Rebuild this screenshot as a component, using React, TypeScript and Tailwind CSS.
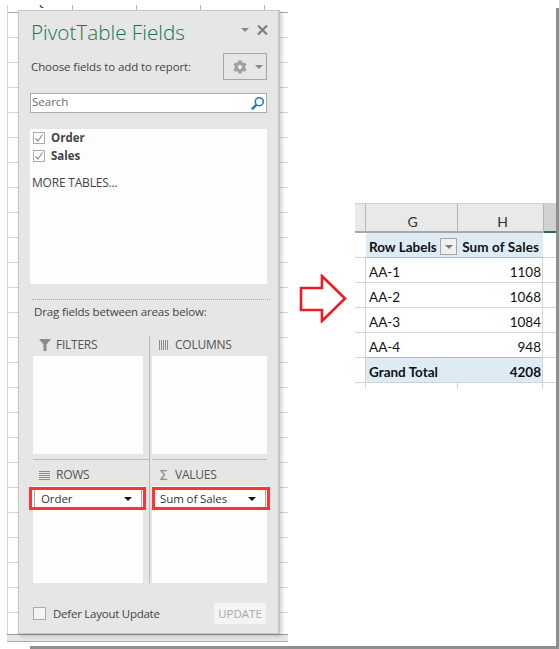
import React from "react";
import { FaCog } from "react-icons/fa";

const ui = "font-['Open_Sans',sans-serif]";

function Tri({ className, color = "#8a8a8a" }: { className?: string; color?: string }) {
  return (
    <svg width="8" height="4" viewBox="0 0 8 4" className={className}>
      <polygon points="0,0 8,0 4,4" fill={color} />
    </svg>
  );
}

function Check({ label, h }: { label: string; h: string }) {
  return (
    <div className={`flex items-center ${h} pl-[3px]`}>
      <div className="w-[12px] h-[12px] border border-[#ababab] bg-white flex items-center justify-center">
        <svg width="10" height="10" viewBox="0 0 10 10">
          <path d="M1.5 5.5 L4 8 L8.5 1.5" fill="none" stroke="#8e8e8e" strokeWidth="1.2" />
        </svg>
      </div>
      <span className="ml-[6px] text-[11.5px] font-bold text-[#444444]">{label}</span>
    </div>
  );
}

function ZoneHead({ icon, label, h }: { icon: React.ReactNode; label: string; h: string }) {
  return (
    <div className={`flex items-center ${h}`}>
      <div className="w-[23px] flex justify-center">{icon}</div>
      <span className="text-[12px] text-[#555555] tracking-[-0.25px]">{label}</span>
    </div>
  );
}

function Field({ label, left }: { label: string; left: boolean }) {
  return (
    <div className="h-[23px] border-[3px] border-[#ff3333] bg-white">
      <div className={`h-full flex items-center justify-between border-r border-[#aaaaaa] ${left ? "border-l ml-[2px] mr-[1px] pl-[6px] pr-[9px]" : "ml-0 mr-[1px] pl-[5px] pr-[9px]"}`}>
        <span className="text-[11.5px] text-[#333333] leading-none tracking-[-0.1px]">{label}</span>
        <Tri color="#111111" />
      </div>
    </div>
  );
}

function Row({ a, b, bold, blue }: { a: React.ReactNode; b: string; bold?: boolean; blue?: boolean }) {
  return (
    <div className="flex h-[25px] border-b border-[#d4d4d4]">
      <div className="w-[11px] border-r border-[#d4d4d4]" />
      <div className={`w-[92px] pl-[2px] pt-[5px] flex items-center ${bold ? "font-bold" : ""} ${blue ? "bg-[#ddebf7]" : ""}`}>{a}</div>
      <div className={`w-[85px] pr-[1px] pt-[5px] flex items-center justify-end border-r border-[#d4d4d4] ${bold ? "font-bold" : ""} ${blue ? "bg-[#ddebf7]" : ""}`}>{b}</div>
    </div>
  );
}

export default function App() {
  return (
    <div className={`relative w-[559px] h-[649px] bg-white overflow-hidden flex items-start ${ui}`}>
      {/* left sheet */}
      <div className="relative ml-[7px] mt-[5px] w-[281px] h-[637px] border-l border-[#d4d4d4] bg-[repeating-linear-gradient(to_bottom,transparent_0,transparent_7px,#d4d4d4_7px,#d4d4d4_8px,transparent_8px,transparent_25px)] shrink-0">
        <div className="absolute left-0 right-0 top-0 h-[8px] bg-white border-b border-[#a9a9a9] flex overflow-hidden text-[13px] text-[#333333] font-['Liberation_Sans',sans-serif]">
          {["Q", "R", "S", "T"].map((l, i) => (
            <div key={l} className={`h-full border-r border-[#b5b5b5] flex justify-center ${i === 0 ? "w-[65px]" : "w-[64px]"}`}>
              <span className="-mt-[11px] leading-[14px]">{l}</span>
            </div>
          ))}
        </div>

        {/* panel */}
        <div className="relative mt-[5px] ml-[10px] w-[262px] h-[624px] bg-[#e6e6e6] border border-[#c6c6c6] border-r-2 shadow-[2px_2px_4px_rgba(0,0,0,0.18)] pl-[11px]">
          <div className="flex items-center justify-between h-[42px] pr-[10px]">
            <span className="text-[20.7px] font-light text-[#217346] leading-none pl-[1px]">PivotTable Fields</span>
            <div className="flex items-center gap-[8px] -mt-[4px]">
              <Tri />
              <svg width="11" height="10" viewBox="0 0 11 10">
                <path d="M1 0.5 L10 9.5 M10 0.5 L1 9.5" stroke="#7f7f7f" strokeWidth="2.2" />
              </svg>
            </div>
          </div>

          <div className="flex items-center justify-between h-[27px] w-[237px]">
            <span className="text-[11.5px] text-[#444444] pl-[1px] tracking-[-0.1px]">Choose fields to add to report:</span>
            <div className="w-[44px] h-[27px] border border-[#a6a6a6] flex items-center pl-[9px] gap-[8px]">
              <FaCog size={14} color="#a0a0a0" />
              <Tri />
            </div>
          </div>

          <div className="mt-[13px] w-[237px] h-[20px] border border-[#ababab] bg-white flex items-center justify-between pl-[1px] pr-[1px]">
            <span className="text-[11.5px] text-[#6d6d6d] leading-none pb-[2px]">Search</span>
            <svg width="15" height="15" viewBox="0 0 15 15">
              <circle cx="9.3" cy="5.7" r="4" fill="none" stroke="#2f75b5" strokeWidth="1.6" />
              <path d="M6.5 8.7 L1.8 13.4" stroke="#2f75b5" strokeWidth="2.4" />
            </svg>
          </div>

          <div className="mt-[16px] w-[237px] h-[155px] bg-[#fdfdfd]">
            <Check label="Order" h="h-[17px]" />
            <Check label="Sales" h="h-[19px]" />
            <div className="mt-[8px] pl-[2px] h-[19px] flex items-center text-[12px] text-[#444444] tracking-[-0.2px]">MORE TABLES...</div>
          </div>

          <div className="mt-[15px] ml-[2px] w-[238px] border-t border-dotted border-[#a8a8a8]" />
          <div className="h-[24px] pl-[4px] flex items-center text-[11.5px] text-[#444444] tracking-[-0.15px]">Drag fields between areas below:</div>

          <div className="mt-[12px] ml-[3px] flex h-[247px]">
            <div className="w-[117px] border-r border-[#bbbbbb]">
              <div className="h-[124px] border-b border-[#bbbbbb]">
                <ZoneHead
                  h="h-[20px] pb-[2px]"
                  label="FILTERS"
                  icon={
                    <svg width="12" height="12" viewBox="0 0 12 12">
                      <path d="M0 0 H12 L7.5 5.5 V12 H4.5 V5.5 Z" fill="#8c8c8c" />
                    </svg>
                  }
                />
                <div className="w-[110px] h-[98px] bg-[#fdfdfd]" />
              </div>
              <ZoneHead
                h="h-[26px] pt-[4px]"
                label="ROWS"
                icon={
                  <svg width="11" height="9" viewBox="0 0 11 9">
                    <path d="M0 .5 H11 M0 2.5 H11 M0 4.5 H11 M0 6.5 H11 M0 8.5 H11" stroke="#8c8c8c" strokeWidth="1" />
                  </svg>
                }
              />
              <div className="w-[110px] h-[97px] bg-[#fdfdfd] pt-[1px]">
                <div className="-ml-[4px] -mr-[3px]">
                  <Field label="Order" left />
                </div>
              </div>
            </div>
            <div className="ml-[2px] w-[115px]">
              <div className="h-[124px] border-b border-[#bbbbbb]">
                <ZoneHead
                  h="h-[20px] pb-[2px]"
                  label="COLUMNS"
                  icon={
                    <svg width="10" height="10" viewBox="0 0 10 10">
                      <path d="M.5 0 V10 M2.5 0 V10 M4.5 0 V10 M6.5 0 V10 M8.5 0 V10" stroke="#8c8c8c" strokeWidth="1" />
                    </svg>
                  }
                />
                <div className="h-[98px] bg-[#fdfdfd]" />
              </div>
              <ZoneHead
                h="h-[26px] pt-[4px]"
                label="VALUES"
                icon={<span className="text-[14px] leading-none text-[#8c8c8c] font-['DejaVu_Sans',sans-serif]">Σ</span>}
              />
              <div className="h-[97px] bg-[#fdfdfd] pt-[1px]">
                <div className="-mr-[3px]">
                  <Field label="Sum of Sales" left={false} />
                </div>
              </div>
            </div>
          </div>

          <div className="mt-[20px] w-[233px] ml-[3px] h-[21px] flex items-center justify-between">
            <div className="flex items-center">
              <div className="w-[13px] h-[13px] border border-[#ababab] bg-[#f4f4f4]" />
              <span className="ml-[7px] text-[11.5px] text-[#444444] tracking-[-0.25px]">Defer Layout Update</span>
            </div>
            <div className="w-[52px] h-[21px] bg-[#f4f4f4] flex items-center justify-center text-[11.5px] text-[#a8a8a8]">UPDATE</div>
          </div>
        </div>

        <div className="h-[8px] -ml-px bg-[#e6e6e6] border-t border-[#999999] border-b border-b-[#aaaaaa]" />
      </div>

      {/* arrow */}
      <svg width="48" height="49" viewBox="0 0 48 49" className="ml-[11px] mt-[274px] shrink-0">
        <polygon points="2,14 23,14 23,2 46,24.5 23,47 23,36 2,36" fill="white" stroke="#ed1c24" strokeWidth="2.6" />
      </svg>

      {/* table */}
      <div className="ml-[8px] mt-[203px] w-[201px] shrink-0 text-[13.5px] text-[#111111] font-['Lato',sans-serif]">
        <div className="flex h-[30px] bg-[#e9e9e9] border-t border-[#d0d0d0] border-b-2 border-b-[#a8a8a8] text-[14px] text-[#333333]">
          <div className="w-[11px] border-r border-[#b5b5b5]" />
          <div className="w-[92px] border-r border-[#b5b5b5] pt-[7px] pl-[2px] flex items-center justify-center">G</div>
          <div className="w-[85px] pt-[7px] pl-[4px] flex items-center justify-center">H</div>
          <div className="flex-1 bg-[#d2d2d2] border-l border-[#b5b5b5] relative">
            <div className="absolute left-0 right-0 -bottom-[2px] h-[2px] bg-[#217346]" />
          </div>
        </div>
        <div className="flex h-[25px] border-b border-[#d4d4d4]">
          <div className="w-[11px]" />
          <div className="w-[92px] bg-[#ddebf7] border-b border-[#9bc2e6] pl-[3px] h-[25px] flex items-center justify-between font-bold">
            <span className="pt-[5px]">Row Labels</span>
            <div className="w-[17px] h-[17px] mt-[3px] mr-px bg-[#f0f0f0] border border-[#a6a6a6] flex items-center justify-center">
              <Tri color="#7a7a7a" />
            </div>
          </div>
          <div className="w-[85px] bg-[#ddebf7] border-b border-[#9bc2e6] h-[25px] pr-[4px] pt-[5px] flex items-center justify-end font-bold tracking-[0.1px]">Sum of Sales</div>
        </div>
        <Row a={<span className="pl-px">AA-1</span>} b="1108" />
        <Row a={<span className="pl-px">AA-2</span>} b="1068" />
        <Row a={<span className="pl-px">AA-3</span>} b="1084" />
        <div className="flex h-[25px]">
          <div className="w-[11px] border-r border-[#d4d4d4] border-b border-b-[#d4d4d4]" />
          <div className="w-[92px] pl-[3px] pt-[5px] flex items-center border-b border-[#9bc2e6]">AA-4</div>
          <div className="w-[85px] pr-[1px] pt-[5px] flex items-center justify-end border-r border-[#d4d4d4] border-b border-b-[#9bc2e6]">948</div>
          <div className="flex-1 border-b border-[#d4d4d4]" />
        </div>
        <Row a={<span className="pl-px">Grand Total</span>} b="4208" bold blue />
        <div className="flex h-[6px]">
          <div className="w-[11px] border-r border-[#d4d4d4]" />
          <div className="w-[92px] border-r border-[#d4d4d4]" />
          <div className="w-[85px] border-r border-[#d4d4d4]" />
        </div>
      </div>

      {/* drop shadow of the screenshot */}
      <div className="absolute left-[30px] right-0 bottom-0 h-[3px] bg-[#8f8f8f]" />
      <div className="absolute top-[8px] right-0 bottom-0 w-[3px] bg-[#8f8f8f]" />
    </div>
  );
}
